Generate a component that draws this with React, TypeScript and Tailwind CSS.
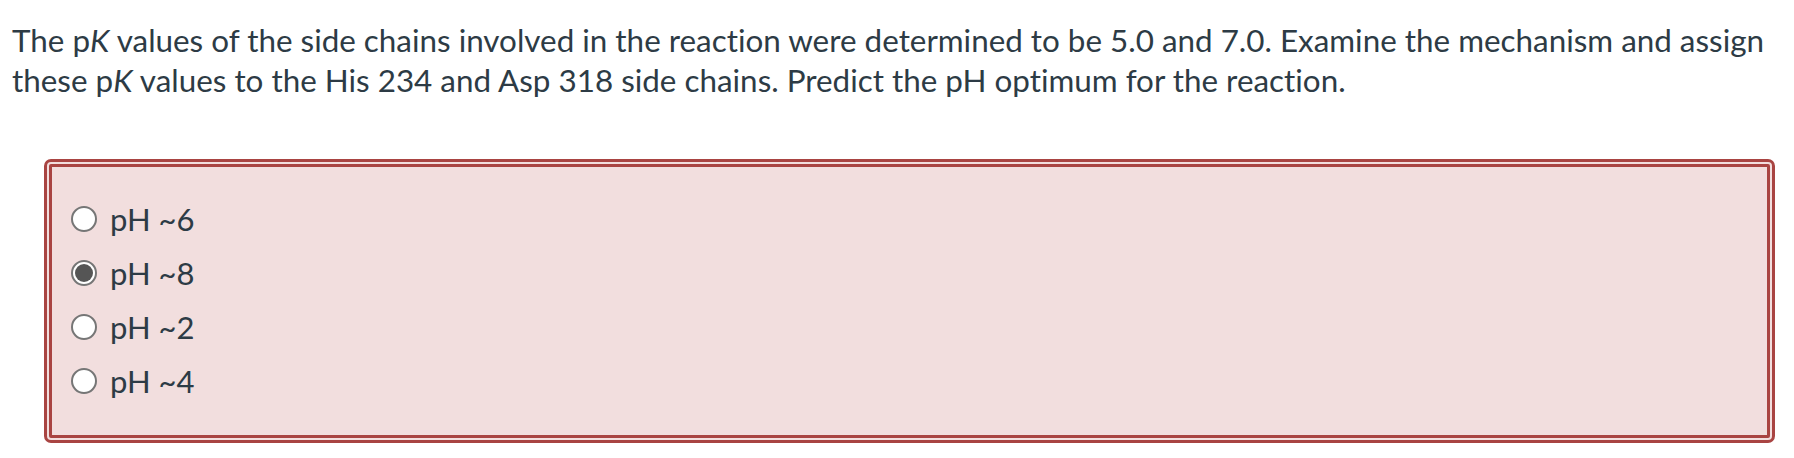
const options = [
	{ label: "pH ~6", checked: false },
	{ label: "pH ~8", checked: true },
	{ label: "pH ~2", checked: false },
	{ label: "pH ~4", checked: false },
]

const Radio = ({ checked }: { checked: boolean }) => (
	<span className="flex h-[26px] w-[26px] shrink-0 items-center justify-center rounded-full border-[2px] border-[#767676] bg-white">
		{checked && <span className="h-[18px] w-[18px] rounded-full bg-[#555555]" />}
	</span>
)

export default function App() {
	return (
		<div className="min-h-screen bg-white pl-[12px] pr-[19px] pt-[20px] font-['Lato',_'Noto_Sans',sans-serif] text-[#2d3b45] [font-variant-ligatures:none]">
			<p className="text-[31.4px] leading-[40px]">
				The p<i>K</i> values of the side chains involved in the reaction were
				determined to be 5.0 and 7.0. Examine the mechanism and assign these p
				<i>K</i> values to the His 234 and Asp 318 side chains. Predict the pH
				optimum for the reaction.
			</p>
			<div className="ml-[32px] mt-[59px] rounded-[7px] border-[3px] border-[#a94442] bg-[#f2dede] p-[2px]">
				<div className="rounded-[2px] border-[3px] border-[#a94442] pb-[27px] pl-[19px] pt-[25px]">
					{options.map((o) => (
						<label key={o.label} className="flex h-[54px] items-center gap-[13px]">
							<Radio checked={o.checked} />
							<span className="text-[31px] leading-none">{o.label}</span>
						</label>
					))}
				</div>
			</div>
		</div>
	)
}
